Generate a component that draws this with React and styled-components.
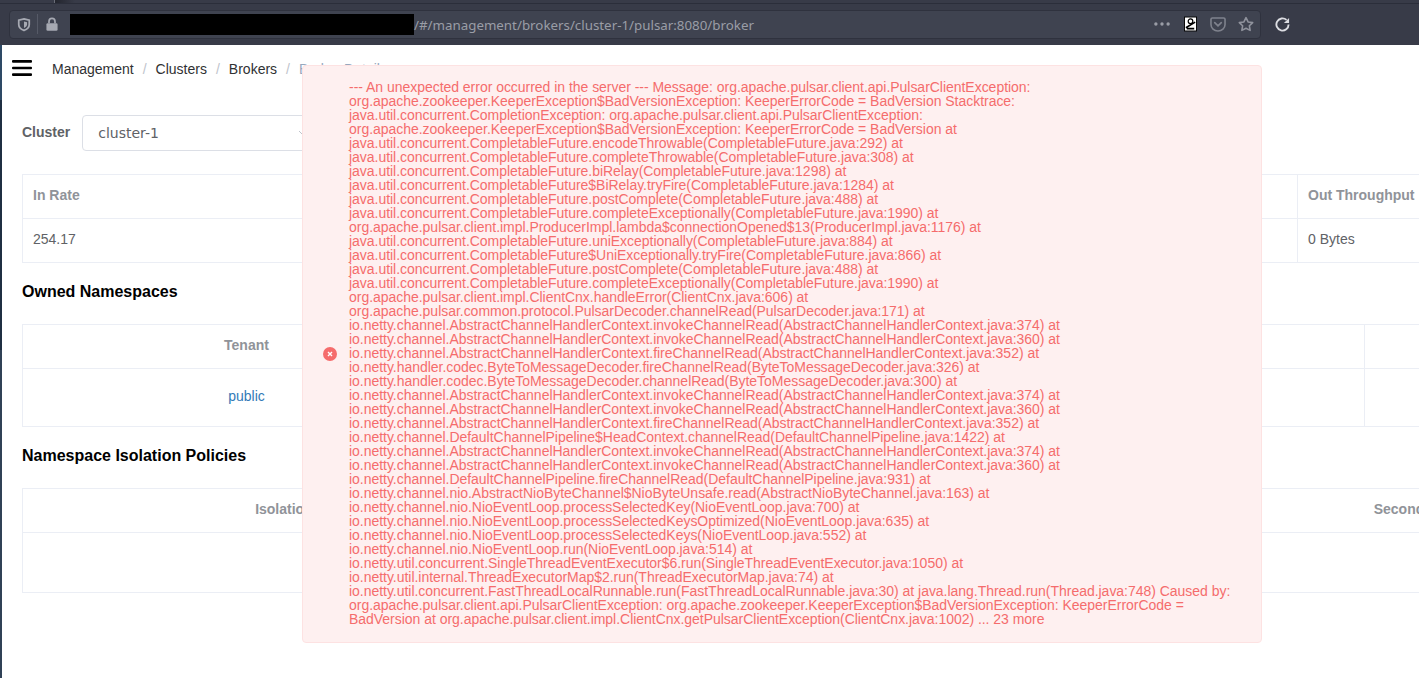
import React from 'react'
import styled, { createGlobalStyle } from 'styled-components'

const GlobalStyle = createGlobalStyle`
  html, body {
    margin: 0;
    height: 100%;
    overflow: hidden;
    background: #ffffff;
  }
  body {
    font-family: "Liberation Sans", Arial, sans-serif;
    font-size: 14px;
  }
`

const Page = styled.div`
  width: 1419px;
  height: 678px;
  overflow: hidden;
  display: flex;
  flex-direction: column;
`
const Browser = styled.div`
  height: 45px;
  flex: none;
  background: #383b48;
  display: flex;
  flex-direction: column;
`
const TabStrip = styled.div`
  height: 3px;
  flex: none;
  border-bottom: 1px solid #2b2e3a;
  padding-left: 54px;
  display: flex;
`
const TabEdge = styled.span`
  width: 20px;
  height: 3px;
  border-left: 1px solid #6a6d78;
  background: linear-gradient(90deg, #23252e, #383b48);
`
const Toolbar = styled.div`
  flex: 1;
  display: flex;
  align-items: center;
  padding: 0 9px 1px;
  gap: 12px;
`
const UrlBar = styled.div`
  width: 1252px;
  height: 29px;
  box-sizing: border-box;
  background: #3f4350;
  border: 1px solid #2f323e;
  border-radius: 4px;
  display: flex;
  align-items: center;
  padding: 0 6px 0 7px;
  color: #8f929c;
`
const Divider = styled.span`
  width: 1px;
  height: 20px;
  background: #565a67;
  margin: 0 8px 0 6px;
`
const Redacted = styled.span`
  width: 344px;
  height: 21px;
  background: #000000;
  margin-left: 12px;
`
const UrlText = styled.span`
  font-family: "Noto Sans", sans-serif;
  font-size: 13.33px;
  line-height: 18px;
  padding-top: 2px;
  color: #9a9da6;
  flex: 1;
`
const ToolIcon = styled.svg`
  flex: none;
  display: block;
  margin-left: ${(p) => p.$gap || 0}px;
`
const Body = styled.div`
  flex: 1;
  display: flex;
  min-height: 0;
`
const SideStrip = styled.div`
  width: 2px;
  flex: none;
  background: linear-gradient(
    180deg,
    #2e4a66 0,
    #2e4a66 55px,
    #1f2f42 55px,
    #1f2f42 305px,
    #304156 305px
  );
`
const Main = styled.div`
  flex: 1;
  min-width: 0;
`
const NavBar = styled.div`
  height: 50px;
  display: flex;
  align-items: center;
  padding-left: 10px;
`
const Hamburger = styled.svg`
  display: block;
  margin: 0 20px 4px 0;
`
const Crumbs = styled.div`
  display: flex;
  align-items: center;
  padding-bottom: 2px;
`
const Crumb = styled.span`
  color: ${(p) => (p.$last ? '#97a8be' : '#303133')};
`
const Sep = styled.span`
  color: #c0c4cc;
  margin: 0 9px;
`
const Content = styled.div`
  padding: 20px 0 0 20px;
`
const FormRow = styled.div`
  display: flex;
  align-items: center;
  margin-bottom: 23px;
`
const Label = styled.label`
  font-weight: 700;
  color: #606266;
  margin-right: 12px;
  padding-bottom: 2px;
`
const SelectBox = styled.div`
  width: 240px;
  height: 36px;
  box-sizing: border-box;
  border: 1px solid #dcdfe6;
  border-radius: 4px;
  display: flex;
  align-items: center;
  justify-content: space-between;
  padding: 0 12px 0 15px;
  color: #606266;
  font-family: "DejaVu Sans", sans-serif;
  font-size: 14px;
`
const Table = styled.table`
  width: ${(p) => p.$width}px;
  table-layout: fixed;
  border-collapse: collapse;
  border: 1px solid #ebeef5;
`
const Th = styled.th`
  height: 44px;
  box-sizing: border-box;
  padding: 0 10px 4px;
  border: 1px solid #ebeef5;
  color: #909399;
  font-weight: 700;
  text-align: ${(p) => p.$align || 'center'};
  white-space: nowrap;
  overflow: hidden;
`
const Td = styled.td`
  height: ${(p) => p.$height || 44}px;
  box-sizing: border-box;
  padding: 0 10px 4px;
  border: 1px solid #ebeef5;
  color: #606266;
  text-align: ${(p) => p.$align || 'center'};
`
const TenantLink = styled.a`
  color: #337ab7;
  text-decoration: none;
`
const Heading = styled.h4`
  margin: 0;
  height: 61px;
  line-height: 58px;
  font-size: 16px;
  font-weight: 700;
  color: #000000;
`
const Alert = styled.div`
  position: fixed;
  left: 302px;
  top: 65px;
  width: 960px;
  height: 578px;
  box-sizing: border-box;
  background: #fef0f0;
  border: 1px solid #fde2e2;
  border-radius: 4px;
  display: flex;
  align-items: center;
  padding: 15px 15px 15px 20px;
`
const AlertIcon = styled.svg`
  flex: none;
  display: block;
  margin-right: 12px;
`
const AlertText = styled.p`
  margin: 0 0 2px;
  color: #f56c6c;
  font-size: 14px;
  line-height: 14px;
  letter-spacing: -0.03px;
`

const errorText =
  '--- An unexpected error occurred in the server --- Message: org.apache.pulsar.client.api.PulsarClientException: org.apache.zookeeper.KeeperException$BadVersionException: KeeperErrorCode = BadVersion Stacktrace: java.util.concurrent.CompletionException: org.apache.pulsar.client.api.PulsarClientException: org.apache.zookeeper.KeeperException$BadVersionException: KeeperErrorCode = BadVersion at java.util.concurrent.CompletableFuture.encodeThrowable(CompletableFuture.java:292) at java.util.concurrent.CompletableFuture.completeThrowable(CompletableFuture.java:308) at java.util.concurrent.CompletableFuture.biRelay(CompletableFuture.java:1298) at java.util.concurrent.CompletableFuture$BiRelay.tryFire(CompletableFuture.java:1284) at java.util.concurrent.CompletableFuture.postComplete(CompletableFuture.java:488) at java.util.concurrent.CompletableFuture.completeExceptionally(CompletableFuture.java:1990) at org.apache.pulsar.client.impl.ProducerImpl.lambda$connectionOpened$13(ProducerImpl.java:1176) at java.util.concurrent.CompletableFuture.uniExceptionally(CompletableFuture.java:884) at java.util.concurrent.CompletableFuture$UniExceptionally.tryFire(CompletableFuture.java:866) at java.util.concurrent.CompletableFuture.postComplete(CompletableFuture.java:488) at java.util.concurrent.CompletableFuture.completeExceptionally(CompletableFuture.java:1990) at org.apache.pulsar.client.impl.ClientCnx.handleError(ClientCnx.java:606) at org.apache.pulsar.common.protocol.PulsarDecoder.channelRead(PulsarDecoder.java:171) at io.netty.channel.AbstractChannelHandlerContext.invokeChannelRead(AbstractChannelHandlerContext.java:374) at io.netty.channel.AbstractChannelHandlerContext.invokeChannelRead(AbstractChannelHandlerContext.java:360) at io.netty.channel.AbstractChannelHandlerContext.fireChannelRead(AbstractChannelHandlerContext.java:352) at io.netty.handler.codec.ByteToMessageDecoder.fireChannelRead(ByteToMessageDecoder.java:326) at io.netty.handler.codec.ByteToMessageDecoder.channelRead(ByteToMessageDecoder.java:300) at io.netty.channel.AbstractChannelHandlerContext.invokeChannelRead(AbstractChannelHandlerContext.java:374) at io.netty.channel.AbstractChannelHandlerContext.invokeChannelRead(AbstractChannelHandlerContext.java:360) at io.netty.channel.AbstractChannelHandlerContext.fireChannelRead(AbstractChannelHandlerContext.java:352) at io.netty.channel.DefaultChannelPipeline$HeadContext.channelRead(DefaultChannelPipeline.java:1422) at io.netty.channel.AbstractChannelHandlerContext.invokeChannelRead(AbstractChannelHandlerContext.java:374) at io.netty.channel.AbstractChannelHandlerContext.invokeChannelRead(AbstractChannelHandlerContext.java:360) at io.netty.channel.DefaultChannelPipeline.fireChannelRead(DefaultChannelPipeline.java:931) at io.netty.channel.nio.AbstractNioByteChannel$NioByteUnsafe.read(AbstractNioByteChannel.java:163) at io.netty.channel.nio.NioEventLoop.processSelectedKey(NioEventLoop.java:700) at io.netty.channel.nio.NioEventLoop.processSelectedKeysOptimized(NioEventLoop.java:635) at io.netty.channel.nio.NioEventLoop.processSelectedKeys(NioEventLoop.java:552) at io.netty.channel.nio.NioEventLoop.run(NioEventLoop.java:514) at io.netty.util.concurrent.SingleThreadEventExecutor$6.run(SingleThreadEventExecutor.java:1050) at io.netty.util.internal.ThreadExecutorMap$2.run(ThreadExecutorMap.java:74) at io.netty.util.concurrent.FastThreadLocalRunnable.run(FastThreadLocalRunnable.java:30) at java.lang.Thread.run(Thread.java:748) Caused by: org.apache.pulsar.client.api.PulsarClientException: org.apache.zookeeper.KeeperException$BadVersionException: KeeperErrorCode = BadVersion at org.apache.pulsar.client.impl.ClientCnx.getPulsarClientException(ClientCnx.java:1002) ... 23 more'

const App = () => (
  <Page>
    <GlobalStyle />
    <Browser>
      <TabStrip>
        <TabEdge />
      </TabStrip>
      <Toolbar>
        <UrlBar>
          <ToolIcon width="14" height="15" viewBox="0 0 16 16" fill="none">
            <path d="M8 1.5 14 3v5c0 3.4-2.6 5.6-6 6.800C4.600 13.600 2 11.400 2 8V3z" stroke="#a6a9b2" strokeWidth="2" />
            <path d="M8 4.500 11.500 5.400V8c0 1.800-1.400 3-3.500 3.900z" fill="#a6a9b2" />
          </ToolIcon>
          <Divider />
          <ToolIcon width="12" height="14" viewBox="0 0 14 16" fill="none">
            <path d="M3.500 7V5a3.500 3.500 0 0 1 7 0v2" stroke="#a6a9b2" strokeWidth="2" />
            <rect x="0.500" y="7" width="13" height="9" rx="1.500" fill="#a6a9b2" />
          </ToolIcon>
          <Redacted />
          <UrlText>/#/management/brokers/cluster-1/pulsar:8080/broker</UrlText>
          <ToolIcon width="16" height="4" viewBox="0 0 17 4" fill="#9a9da6">
            <circle cx="2" cy="2" r="1.800" />
            <circle cx="8.500" cy="2" r="1.800" />
            <circle cx="15" cy="2" r="1.800" />
          </ToolIcon>
          <ToolIcon $gap={14} width="13" height="16" viewBox="0 0 14 16">
            <rect x="0.500" y="0.500" width="13" height="15" fill="#ffffff" stroke="#000000" />
            <circle cx="7" cy="5" r="2.500" fill="none" stroke="#000000" strokeWidth="1.300" />
            <path d="M2 12 12 6M3 13h8" stroke="#000000" strokeWidth="1.800" fill="none" />
          </ToolIcon>
          <ToolIcon $gap={13} width="16" height="15" viewBox="0 0 17 16" fill="none">
            <path d="M1 2.500c0-.8.600-1.500 1.500-1.500h12c.900 0 1.500.700 1.500 1.500V8a7.500 7 0 0 1-15 0z" stroke="#7f828d" strokeWidth="1.700" />
            <path d="m5 6 3.500 3.500L12 6" stroke="#7f828d" strokeWidth="1.800" strokeLinecap="round" />
          </ToolIcon>
          <ToolIcon $gap={12} width="16" height="16" viewBox="0 0 17 16" fill="none">
            <path d="m8.500 1.300 2.200 4.500 4.900.7-3.500 3.400.8 4.900-4.400-2.300-4.400 2.300.8-4.900L1.400 6.500l4.900-.7z" stroke="#8f929c" strokeWidth="1.700" strokeLinejoin="round" />
          </ToolIcon>
        </UrlBar>
        <ToolIcon $gap={2} width="15" height="15" viewBox="0 0 16 16" fill="none">
          <path d="M14.500 8A6.500 6.500 0 1 1 12.300 3.100" stroke="#dcdde2" strokeWidth="2" />
          <path d="M15 1v5.500H9.500z" fill="#dcdde2" />
        </ToolIcon>
      </Toolbar>
    </Browser>
    <Body>
      <SideStrip />
      <Main>
        <NavBar>
          <Hamburger width="20" height="16" viewBox="0 0 20 16" fill="#000000">
            <rect y="0" width="20" height="2.670" rx="1" />
            <rect y="6.670" width="20" height="2.670" rx="1" />
            <rect y="13.330" width="20" height="2.670" rx="1" />
          </Hamburger>
          <Crumbs>
            <Crumb>Management</Crumb>
            <Sep>/</Sep>
            <Crumb>Clusters</Crumb>
            <Sep>/</Sep>
            <Crumb>Brokers</Crumb>
            <Sep>/</Sep>
            <Crumb $last>Broker Details</Crumb>
          </Crumbs>
        </NavBar>
        <Content>
          <FormRow>
            <Label>Cluster</Label>
            <SelectBox>
              cluster-1
              <svg width="12" height="12" viewBox="0 0 12 12" fill="none">
                <path d="m2 4 4 4 4-4" stroke="#c0c4cc" strokeWidth="1" />
              </svg>
            </SelectBox>
          </FormRow>
          <Table $width={1600}>
            <colgroup>
              <col width="480" />
              <col width="400" />
              <col width="395" />
              <col width="325" />
            </colgroup>
            <thead>
              <tr>
                <Th $align="left">In Rate</Th>
                <Th />
                <Th />
                <Th $align="left">Out Throughput</Th>
              </tr>
            </thead>
            <tbody>
              <tr>
                <Td $align="left">254.17</Td>
                <Td />
                <Td />
                <Td $align="left">0 Bytes</Td>
              </tr>
            </tbody>
          </Table>
          <Heading>Owned Namespaces</Heading>
          <Table $width={1600}>
            <colgroup>
              <col width="448" />
              <col width="894" />
              <col width="258" />
            </colgroup>
            <thead>
              <tr>
                <Th>Tenant</Th>
                <Th />
                <Th />
              </tr>
            </thead>
            <tbody>
              <tr>
                <Td $height={58}>
                  <TenantLink>public</TenantLink>
                </Td>
                <Td $height={58} />
                <Td $height={58} />
              </tr>
            </tbody>
          </Table>
          <Heading>Namespace Isolation Policies</Heading>
          <Table $width={1674}>
            <colgroup>
              <col width="568" />
              <col width="532" />
              <col width="574" />
            </colgroup>
            <thead>
              <tr>
                <Th>Isolation Policy</Th>
                <Th />
                <Th>Secondary</Th>
              </tr>
            </thead>
            <tbody>
              <tr>
                <Td $height={60} />
                <Td $height={60} />
                <Td $height={60} />
              </tr>
            </tbody>
          </Table>
        </Content>
      </Main>
    </Body>
    <Alert>
      <AlertIcon width="14" height="14" viewBox="0 0 14 14">
        <circle cx="7" cy="7" r="7" fill="#f56c6c" />
        <path d="m5 5 4 4M9 5 5 9" stroke="#ffffff" strokeWidth="1.400" />
      </AlertIcon>
      <AlertText>{errorText}</AlertText>
    </Alert>
  </Page>
)

export default App
